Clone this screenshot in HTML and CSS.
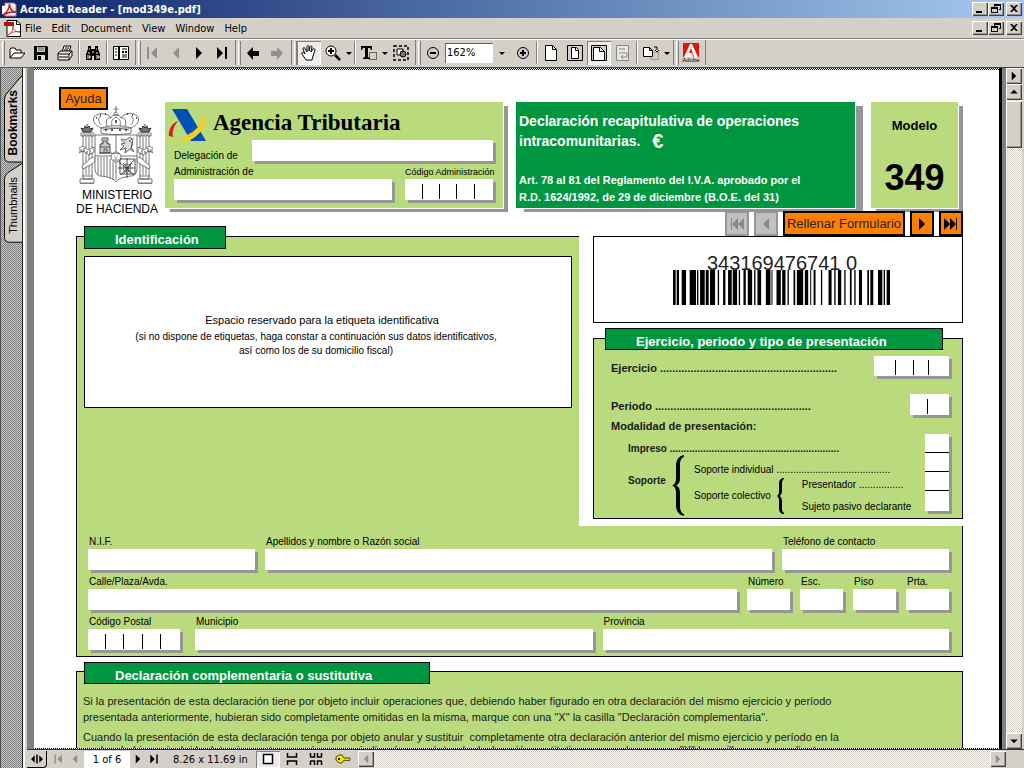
FILE: index.html
```html
<!DOCTYPE html>
<html lang="es">
<head>
<meta charset="utf-8">
<title>Acrobat Reader - [mod349e.pdf]</title>
<link rel="stylesheet" href="styles.css">
</head>
<body>
<svg class="defs" aria-hidden="true">
  <symbol id="i-min" viewBox="0 0 12 10"><path d="M2 7h6v2H2z"/></symbol>
  <symbol id="i-restore" viewBox="0 0 12 10"><path d="M4 0h7v6H9V5h1V2H5v1H4zM1 3h7v6H1zM2 5v3h5V5z" fill-rule="evenodd"/></symbol>
  <symbol id="i-close" viewBox="0 0 12 10"><path d="M2 1h2l2 2 2-2h2L7 4.500l3 3.500H8L6 6 4 8H2l3-3.500z"/></symbol>
  <symbol id="i-down" viewBox="0 0 8 16"><path d="M1 7h6L4 10z"/></symbol>
  <symbol id="i-first" viewBox="0 0 16 16"><path d="M2 2h2v12H2zM12 2v12L6 8z"/></symbol>
  <symbol id="i-prev" viewBox="0 0 16 16"><path d="M11 2v12L5 8z"/></symbol>
  <symbol id="i-next" viewBox="0 0 16 16"><path d="M5 2v12l6-6z"/></symbol>
  <symbol id="i-last" viewBox="0 0 16 16"><path d="M3 2v12l6-6zM11 2h2v12h-2z"/></symbol>
  <symbol id="i-left" viewBox="0 0 16 16"><path d="M2 8l6-6v4h6v5H8v4z"/></symbol>
  <symbol id="i-right" viewBox="0 0 16 16"><path d="M14 8L8 2v4H2v5h6v4z"/></symbol>
  <symbol id="i-dfirst" viewBox="0 0 16 16"><path d="M2 2h1v12H2zM9 2v12L3 8zM15 2v12L9 8z"/></symbol>
  <symbol id="i-dlast" viewBox="0 0 16 16"><path d="M1 2v12l6-6zM7 2v12l6-6zM13 2h1v12h-1z"/></symbol>
</svg>
<div class="app">
  <header class="titlebar">
    <svg class="app-icon" viewBox="0 0 16 16"><path d="M3 1h10l2 2v12H3z" fill="#eee" stroke="#a66"/><path d="M0 4h6v9H0z" fill="#fff"/><path d="M1 14C6 10 8 6 8 2c0 5 2 8 7 9-5-1-9 0-14 3z" fill="none" stroke="#c01818" stroke-width="1.500"/></svg>
    <h1 class="title">Acrobat Reader - [mod349e.pdf]</h1>
    <div class="winbtns">
      <button aria-label="Minimize"><svg><use href="#i-min"/></svg></button><button aria-label="Restore"><svg><use href="#i-restore"/></svg></button><button class="close" aria-label="Close"><svg><use href="#i-close"/></svg></button>
    </div>
  </header>
  <nav class="menubar">
    <svg class="doc-icon" viewBox="0 0 17 17"><path d="M3 .5h10l3.500 3.500v12.500H3z" fill="#fff" stroke="#000"/><path d="M12.500 1v3.500H16" fill="none" stroke="#000"/><path d="M0 2h10v4H0z" fill="#b01010"/><path d="M4 15C8 13 9 10 9 6c0 4 3 6 7 6-5-1-8 0-12 3z" fill="none" stroke="#e03030"/></svg>
    <button>File</button><button>Edit</button><button>Document</button><button>View</button><button>Window</button><button>Help</button>
    <div class="winbtns">
      <button aria-label="Minimize document"><svg><use href="#i-min"/></svg></button><button aria-label="Restore document"><svg><use href="#i-restore"/></svg></button><button class="close" aria-label="Close document"><svg><use href="#i-close"/></svg></button>
    </div>
  </nav>
  <div class="toolbar" role="toolbar">
    <div class="group">
      <button aria-label="Open"><svg viewBox="0 0 16 16"><path d="M1 13V4l1-1h4l1 2h5v3M1 13l4-5h11l-4 5z" fill="#fff" stroke="#000"/></svg></button>
      <button aria-label="Save"><svg viewBox="0 0 16 16"><path d="M1 1h13l1 1v13H1z"/><path d="M4 2h8v5H4z" fill="#d4d0c8"/><path d="M5 3h6M5 5h6" stroke="#555"/><path d="M4 10h8v5H4z" fill="#ddd"/><path d="M5 11h3v4H5z"/></svg></button>
      <button aria-label="Print"><svg viewBox="0 0 16 16"><path d="M5 7l2-6h7l-2 6z" fill="#fff" stroke="#000"/><path d="M8 3h4M7 5h4" stroke="#000"/><path d="M1 8l3-2h11v5l-3 4H1z" fill="#eee" stroke="#000"/><path d="M1 9h11l3-3M12 9v6M2 12h9" fill="none" stroke="#000"/></svg></button>
      <span class="sep"></span>
      <button aria-label="Find"><svg viewBox="0 0 16 16"><path d="M3 1h3v3h4V1h3v3l2 5v6H9v-4H7v4H1V9l2-5z"/><path d="M3 8h2M2 11h3v2H2M11 8h2M11 11h3v2h-3M7 7h2M4 4h1M11 4h1" stroke="#fff" fill="none"/></svg></button>
      <span class="sep"></span>
      <button aria-label="Navigation pane"><svg viewBox="0 0 16 16"><path d="M.5 1.500h15v13H.5z" fill="#fff" stroke="#000"/><path d="M5 1h2v14H5z"/><path d="M2 4h2M2 7h2M2 10h2M9 4h5M9 10h5M9 12h5" stroke="#000"/><path d="M9 6h2v2H9zM12 6h2v2h-2z"/></svg></button>
    </div>
    <div class="group pages">
      <button aria-label="First page" class="off"><svg><use href="#i-first"/></svg></button>
      <button aria-label="Previous page" class="off"><svg><use href="#i-prev"/></svg></button>
      <button aria-label="Next page"><svg><use href="#i-next"/></svg></button>
      <button aria-label="Last page"><svg><use href="#i-last"/></svg></button>
    </div>
    <div class="group">
      <button aria-label="Back"><svg><use href="#i-left"/></svg></button>
      <button aria-label="Forward" class="off"><svg><use href="#i-right"/></svg></button>
    </div>
    <div class="group">
      <button aria-label="Hand" class="pressed"><svg viewBox="0 0 16 16"><path d="M5 15L1 9c-1-2 1-2 2-1l1 1-2-5c0-2 2-2 2 0l2 3V2c0-2 2-2 2 0v4l1-4c1-2 2-1 2 0l-1 5 2-3c1-1 2 0 2 1l-2 6-1 4z" fill="#fff" stroke="#000"/></svg></button>
      <button aria-label="Zoom in"><svg viewBox="0 0 16 16"><circle cx="6" cy="6" r="5" fill="#fff" stroke="#000"/><path d="M3 6h6M6 3v6" stroke="#000" stroke-width="2"/><path d="M10 10l5 5" stroke="#000" stroke-width="2.500"/></svg></button>
      <button class="dd" aria-label="Zoom options"><svg><use href="#i-down"/></svg></button>
      <span class="sep"></span>
      <button aria-label="Text select"><svg viewBox="0 0 16 16"><path d="M0 1h11v4h-1L9 3H7v9l2 1v1H2v-1l2-1V3H2L1 5H0z"/><path d="M8.500 7.500h7v7h-7z" fill="none" stroke="#000" stroke-dasharray="1 1"/></svg></button>
      <button class="dd" aria-label="Text options"><svg><use href="#i-down"/></svg></button>
      <button aria-label="Graphics select"><svg viewBox="0 0 16 16"><path d="M1 1h14v14H1z" fill="none" stroke="#000" stroke-width="1.500" stroke-dasharray="3 2"/><path d="M4 4h6v6H4z" fill="#fff" stroke="#000"/><circle cx="10" cy="9" r="3" fill="#777" stroke="#000"/></svg></button>
    </div>
    <div class="group">
      <button aria-label="Zoom out"><svg viewBox="0 0 16 16"><circle cx="8" cy="8" r="5.500" fill="#ccc" stroke="#000"/><path d="M5 8h6" stroke="#000" stroke-width="2"/></svg></button>
      <input class="zoom" aria-label="Zoom" value="162%">
      <button class="dd wide" aria-label="Zoom levels"><svg><use href="#i-down"/></svg></button>
      <button aria-label="Zoom in step"><svg viewBox="0 0 16 16"><circle cx="8" cy="8" r="5.500" fill="#ccc" stroke="#000"/><path d="M5 8h6M8 5v6" stroke="#000" stroke-width="2"/></svg></button>
      <span class="sep"></span>
      <button aria-label="Actual size"><svg viewBox="0 0 16 16"><path d="M2.500.5h7l4 4v11h-11z" fill="#fff" stroke="#000"/><path d="M9.500.5v4h4" fill="none" stroke="#000"/></svg></button>
      <button aria-label="Fit page"><svg viewBox="0 0 16 16"><path d="M.5.5h15v15H.5z" fill="#d4d0c8" stroke="#000"/><path d="M4.500 2.500h5l2 2v9h-7z" fill="#fff" stroke="#000"/><path d="M8.500 2.500v3h3" fill="none" stroke="#000"/></svg></button>
      <button aria-label="Fit width" class="pressed"><svg viewBox="0 0 16 16"><path d="M.5.5h15v15H.5z" fill="#d4d0c8" stroke="#000"/><path d="M2.500 2.500h7l4 4v9h-11z" fill="#fff" stroke="#000"/><path d="M8.500 2.500v4h5" fill="none" stroke="#000"/></svg></button>
      <button aria-label="Reflow" class="off"><svg viewBox="0 0 16 16"><path d="M1.500.5h12v15h-12z" fill="#e8e8e8" stroke="#888"/><path d="M4 4h6M4 8h8v4H6M8 10l-2 2 2 2" fill="none" stroke="#888"/></svg></button>
      <span class="sep"></span>
      <button aria-label="Rotate"><svg viewBox="0 0 16 16"><path d="M7.500 7.500h8v7h-8z" fill="#ccc" stroke="#999"/><path d="M.5 2.500h6l3 3v6h-9z" fill="#fff" stroke="#000"/><path d="M6.500 2.500v3h3M11 2h3v3M12 5l2 2 2-2" fill="none" stroke="#000"/></svg></button>
      <button class="dd" aria-label="Rotate options"><svg><use href="#i-down"/></svg></button>
    </div>
    <div class="group">
      <button aria-label="Adobe" class="adobe"><svg viewBox="0 0 16 14"><path d="M0 0h16v14H0z" fill="#e8100c"/><path d="M1 14L7 1h2l6 13h-4L8 5 6 10h3l1 4z" fill="#fff"/></svg><span>Adobe</span></button>
    </div>
  </div>

  <div class="workspace">
    <aside class="sidebar">
      <button class="tab front"><svg viewBox="0 0 18 88" preserveAspectRatio="none"><path d="M18 .5L4 17C1 20 .5 22 .5 25v57c0 3 2 5 5 5H18" fill="#d4d0c8" stroke="#000"/></svg><span>Bookmarks</span></button>
      <button class="tab back"><svg viewBox="0 0 18 88" preserveAspectRatio="none"><path d="M18 .5L4 10C1 13 .5 15 .5 18v60c0 3 2 5 5 5H18" fill="#d4d0c8" stroke="#000"/></svg><span>Thumbnails</span></button>
    </aside>
    <div class="viewer">
      <div class="docarea">
        <main class="page">
          <button class="help">Ayuda</button>
          <section class="head">
            <div class="ministry">
              <svg class="crest" viewBox="0 0 74 78" stroke="#555" stroke-width="0.800">
                <path d="M37 0v7M34.500 3h5M35 7c2-2 4 0 4 2h-4zM22 22c-6-3-9-7-7-11 4-5 14-4 17 1 1-4 9-4 10 0 4-6 14-6 17-1 2 4-1 8-7 11z"/>
                <path d="M22 22c9-3 21-3 30 0v5c-9 2-21 2-30 0zM24 24c8-2 18-2 26 0M28 20c-2-5 0-9 4-8M46 20c2-5 0-9-4-8M33 20c-1-5 0-7 4-9 4 2 5 4 4 9M22 19c-3-4-3-7 0-9M52 19c3-4 3-7 0-9"/>
                <path d="M17 12h1M21 9h1M26 8h1M48 8h1M53 9h1M57 12h1M37 14v3M26 24h2M32 24h2M40 24h2M46 24h2" stroke="#222" stroke-width="1.500"/>
                <path d="M16 29h42v32c0 6-2 9-6 9-7 1-12 2-15 6-3-4-8-5-15-6-4 0-6-3-6-9z"/>
                <path d="M37 29v18M16 50h16M42 50h16M37 55v19M19 51v18M22 51v19M25 51v20M28 51v20M31 53v20M34 56v18"/>
                <path d="M21 47v-9h3v-3h4v3h3v9zM20 47h13M23 35v-3h6v3M25 47v-4h3v4M21 41h10M23 38v-2M29 38v-2" stroke="#333" fill="#ccc"/>
                <path d="M42 34c2-2 3 0 5 0 2-3 5-3 6-1l-3 2c4 1 5 4 2 6l3 5-4-3-5 4 1-5-6 2 4-4-3-2 4-1zM54 32l-2 11" stroke="#444" fill="#ddd"/>
                <circle cx="37" cy="51" r="5" fill="#fff"/><path d="M33 48c3-1 5-1 8 0M34 54h6M35 50h1M38 50h1M36 52h2"/>
                <path d="M40 56l15 13M55 54L42 69M39 62h17M48 52v20M41 53h15v15H41zM44 57c4 3 5 8 1 10M53 57c-4 3-5 8-1 10" stroke="#222"/><circle cx="48" cy="62" r="4"/>
                <path d="M4 29h9v44H4zM61 29h9v44h-9zM2 27h13v3H2zM59 27h13v3H59zM1 73h14v4H1zM59 73h14v4H59zM3 70h11M60 70h11M7 31v38M10 31v38M64 31v38M67 31v38"/>
                <path d="M4 26l-2-4 3 1 1-3 2 2 2-2 1 3 3-1-2 4zM62 26l-2-4 3 1 1-3 2 2 2-2 1 3 3-1-2 4zM8 18v3M66 18v3" stroke="#111" fill="#777"/>
                <path d="M0 42l4-2 5 4 6-3v5l-5 3-6-4-4 2zM3 60l9-8c5-3 5 4 1 6l-9 5zM74 42l-4-2-5 4-6-3v5l5 3 6-4 4 2zM71 60l-9-8c-5-3-5 4-1 6l9 5z" fill="#fff"/>
                <path d="M2 43v3M5 42v4M8 45v2M11 44v4M72 43v3M69 42v4M66 45v2M63 44v4M1 78h14M59 78h14" stroke="#222"/>
              </svg>
              <p>MINISTERIO<br>DE HACIENDA</p>
            </div>
            <div class="card agency">
              <div class="brand">
                <svg viewBox="0 0 38 34"><path d="M4 1h15l19 32H23z" fill="#0050b8"/><path d="M10 13C4 15 0 22 1 28l4 1c-1-6 1-11 5-16z" fill="#d81e1e"/><path d="M1 29c2 6 14 5 24-3C34 18 38 12 36 7c4 7 1 14-9 22C18 36 4 37 1 29z" fill="#f8d020"/><path d="M18 29c9-4 16-11 18-21" stroke="#f8d020" stroke-width="2" fill="none"/></svg>
                <h2>Agencia Tributaria</h2>
              </div>
              <div class="deleg"><label for="deleg">Delegación de</label><input id="deleg"></div>
              <div class="admin">
                <div class="field"><label for="admin">Administración de</label><input id="admin"></div>
                <div class="field code"><label for="codadm">Código Administración</label><input id="codadm" class="cells five"></div>
              </div>
            </div>
            <div class="card subject">
              <h2>Declaración recapitulativa de operaciones<br>intracomunitarias. <span class="euro">€</span></h2>
              <p>Art. 78 al 81 del Reglamento del I.V.A. aprobado por el<br>R.D. 1624/1992, de 29 de diciembre (B.O.E. del 31)</p>
            </div>
            <div class="card model"><span>Modelo</span><strong>349</strong></div>
          </section>
          <nav class="formnav">
            <button class="gray" aria-label="Primera"><svg><use href="#i-dfirst"/></svg></button>
            <button class="gray" aria-label="Anterior"><svg><use href="#i-prev"/></svg></button>
            <button class="fill">Rellenar Formulario</button>
            <button aria-label="Siguiente"><svg><use href="#i-next"/></svg></button>
            <button aria-label="Última"><svg><use href="#i-dlast"/></svg></button>
          </nav>
          <section class="main">
            <div class="ident">
              <h3 class="band short">Identificación</h3>
              <div class="sticker"><p>Espacio reservado para la etiqueta identificativa</p><small>(si no dispone de etiquetas, haga constar a continuación sus datos identificativos,<br>así como los de su domicilio fiscal)</small></div>
            </div>
            <div class="side">
              <div class="barcode">
                <span>343169476741 0</span>
                <svg viewBox="279 0 650 105" preserveAspectRatio="none"><path d="M279 0h8v105h-8zM290 0h7v105h-7zM305 0h13v105h-13zM329 0h19v105h-19zM351 0h4v105h-4zM360 0h14v105h-14zM377 0h9v105h-9zM390 0h15v105h-15zM413 0h4v105h-4zM429 0h7v105h-7zM444 0h11v105h-11zM458 0h13v105h-13zM476 0h4v105h-4zM490 0h7v105h-7zM503 0h13v105h-13zM522 0h4v105h-4zM532 0h11v105h-11zM557 0h14v105h-14zM574 0h3v105h-3zM589 0h13v105h-13zM606 0h10v105h-10zM622 0h4v105h-4zM640 0h5v105h-5zM650 0h19v105h-19zM674 0h10v105h-10zM690 0h3v105h-3zM700 0h6v105h-6zM722 0h4v105h-4zM745 0h9v105h-9zM762 0h4v105h-4zM773 0h10v105h-10zM792 0h4v105h-4zM809 0h5v105h-5zM822 0h4v105h-4zM836 0h9v105h-9zM861 0h5v105h-5zM870 0h9v105h-9zM893 0h13v105h-13zM910 0h4v105h-4zM919 0h10v105h-10z"/></svg>
              </div>
              <div class="period">
                <h3 class="band long">Ejercicio, periodo y tipo de presentación</h3>
                <div class="line"><label for="ejer">Ejercicio ..........................................................</label><input id="ejer" class="cells four"></div>
                <div class="line"><label for="per">Periodo ...................................................</label><input id="per" class="cells two"></div>
                <h4>Modalidad de presentación:</h4>
                <div class="mode">
                  <div class="tree">
                    <label for="m1" class="b">Impreso .............................................................</label>
                    <div class="branch">
                      <span class="b sop">Soporte</span>
                      <svg class="brace big" viewBox="0 0 12 62"><path d="M12 0C7 1 4 5 4 11v12c0 4-1 7-4 8 3 1 4 4 4 8v12c0 6 3 10 8 11v-2c-3-1-4-4-4-9V38c0-3-1-6-4-7 3-1 4-4 4-7V11c0-5 1-8 4-9z"/></svg>
                      <div class="leaves">
                        <label for="m2">Soporte individual .........................................</label>
                        <div class="sub"><span>Soporte colectivo</span>
                          <svg class="brace" viewBox="0 0 7 36"><path d="M7 0C4 0 2 2 2 6v7c0 3-1 4-2 5 1 1 2 2 2 5v7c0 4 2 6 5 6v-1c-2-1-2-3-2-5v-7c0-2-1-4-2-5 1-1 2-3 2-5V6c0-2 0-4 2-5z"/></svg>
                          <div class="subleaves"><label for="m3">Presentador ................</label><label for="m4">Sujeto pasivo declarante</label></div>
                        </div>
                      </div>
                    </div>
                  </div>
                  <div class="checks"><input type="checkbox" id="m1"><input type="checkbox" id="m2"><input type="checkbox" id="m3"><input type="checkbox" id="m4"></div>
                </div>
              </div>
            </div>
            <div class="fields">
              <div class="row">
                <div class="field nif"><label for="nif">N.I.F.</label><input id="nif"></div>
                <div class="field grow"><label for="ape">Apellidos y nombre o Razón social</label><input id="ape"></div>
                <div class="field nif"><label for="tel">Teléfono de contacto</label><input id="tel"></div>
              </div>
              <div class="row">
                <div class="field grow"><label for="calle">Calle/Plaza/Avda.</label><input id="calle"></div>
                <div class="field num"><label for="num">Número</label><input id="num"></div>
                <div class="field num"><label for="esc">Esc.</label><input id="esc"></div>
                <div class="field num"><label for="piso">Piso</label><input id="piso"></div>
                <div class="field num"><label for="prta">Prta.</label><input id="prta"></div>
              </div>
              <div class="row">
                <div class="field cp"><label for="cp">Código Postal</label><input id="cp" class="cells five"></div>
                <div class="field muni"><label for="muni">Municipio</label><input id="muni"></div>
                <div class="field prov"><label for="prov">Provincia</label><input id="prov"></div>
              </div>
            </div>
          </section>
          <section class="comp">
            <h3 class="band medium">Declaración complementaria o sustitutiva</h3>
            <p>Si la presentación de esta declaración tiene por objeto incluir operaciones que, debiendo haber figurado en otra declaración del mismo ejercicio y período<br>presentada anteriormente, hubieran sido completamente omitidas en la misma, marque con una "X" la casilla "Declaración complementaria".</p>
            <p class="tight">Cuando la presentación de esta declaración tenga por objeto anular y sustituir&nbsp; completamente otra declaración anterior del mismo ejercicio y período en la<br>cual se hubieran incluido datos inexactos o erróneos, se indicará su carácter de declaración sustitutiva marcando con una "X" la casilla correspondiente.</p>
          </section>
        </main>
        <div class="vscroll">
          <button aria-label="Menu"><svg><use href="#i-next"/></svg></button>
          <button aria-label="Up"><svg viewBox="0 0 16 16"><path d="M3 10h10L8 5z"/></svg></button>
          <div class="thumb"></div>
          <button class="bottom" aria-label="Down"><svg viewBox="0 0 16 16"><path d="M3 6h10l-5 5z"/></svg></button>
        </div>
      </div>
      <footer class="status">
        <button class="split" aria-label="Toggle pane"><svg viewBox="0 0 16 16"><path d="M5 3v10L0 8zM11 3v10l5-5zM7 2h2v12H7z"/></svg></button>
        <button class="off" aria-label="First"><svg><use href="#i-first"/></svg></button>
        <button class="off" aria-label="Previous"><svg><use href="#i-prev"/></svg></button>
        <input class="pageno" aria-label="Page" value="1 of 6">
        <button aria-label="Next"><svg><use href="#i-next"/></svg></button>
        <button aria-label="Last"><svg><use href="#i-last"/></svg></button>
        <span class="size">8.26 x 11.69 in</span>
        <button class="view pressed" aria-label="Single page"><svg viewBox="0 0 16 16"><path d="M3.500 3.500h9v9h-9z" fill="#fff" stroke="#000" stroke-width="1.500"/></svg></button>
        <button class="view" aria-label="Continuous"><svg viewBox="0 0 16 16"><path d="M3.500 2v4h9V2M3.500 14v-4h9v4" fill="none" stroke="#000" stroke-width="1.500"/></svg></button>
        <button class="view" aria-label="Facing"><svg viewBox="0 0 16 16"><path d="M2 6h4.500V2M14 6H9.500V2M2 10h4.500v4M14 10H9.500v4M2.500 2v4M13.500 2v4M2.500 10v4M13.500 10v4" fill="none" stroke="#000" stroke-width="1.500"/></svg></button>
        <button class="view key" aria-label="Security"><svg viewBox="0 0 16 16"><path d="M4 4h3l2 3h6v2l-1 1-2-1-1 1-2-1-2 3H4L1 9V6z" fill="#f4e800" stroke="#554400"/><path d="M3 7h2v2H3z"/></svg></button>
        <button class="arrow off" aria-label="Scroll left"><svg><use href="#i-prev"/></svg></button>
        <div class="track"></div>
        <button class="arrow off" aria-label="Scroll right"><svg><use href="#i-next"/></svg></button>
        <span class="corner"></span>
      </footer>
    </div>
  </div>
</div>
</body>
</html>
```
FILE: styles.css
```css
:root {
  --face: #d4d0c8;
  --light: #b9db7d;
  --green: #009640;
  --shade: #969696;
  --orange: #ff8000;
}
*, *::before, *::after { box-sizing: border-box; }
html, body { height: 100%; }
body { margin: 0; overflow: hidden; font: 12px "Liberation Sans", Arial, sans-serif; color: #000; }
h1, h2, h3, h4, p { margin: 0; font-size: inherit; }
button { font: inherit; color: inherit; padding: 0; border: 0; background: none; display: flex; align-items: center; justify-content: center; flex: none; white-space: nowrap; }
input { font: inherit; margin: 0; padding: 0 3px; border: 0; border-radius: 0; min-width: 0; background: #fff; }
svg { display: block; flex: none; fill: #000; }
label { white-space: nowrap; }
.defs { position: absolute; width: 0; height: 0; }
.app { height: 100%; display: flex; flex-direction: column; background: var(--face); }

/* Window chrome */
.titlebar { flex: none; height: 18px; display: flex; align-items: center; padding: 0 2px; background: linear-gradient(90deg, #0a246a, #a6caf0); color: #fff; }
.app-icon { width: 15px; height: 15px; margin-right: 3px; }
.title { font: bold 11px "DejaVu Sans Condensed", "Noto Sans", sans-serif; }
.menubar { flex: none; height: 20px; display: flex; align-items: center; padding: 0 2px; gap: 10px; font: 11px "DejaVu Sans Condensed", "Noto Sans", sans-serif; }
.doc-icon { width: 17px; height: 17px; margin: 0 -6px 0 2px; }
.winbtns { margin-left: auto; display: flex; }
.winbtns button { width: 16px; height: 14px; background: var(--face); box-shadow: inset 1px 1px #fff, inset -1px -1px #404040, inset -2px -2px #999; }
.winbtns .close { margin-left: 2px; }
.winbtns svg { width: 12px; height: 10px; }
.toolbar { flex: none; height: 29px; display: flex; border-top: 1px solid #808080; box-shadow: inset 0 1px #fff; padding: 1px 0 2px; }
.group { display: flex; align-items: center; padding-right: 2px; border-right: 1px solid #808080; }
.group::before { content: ""; width: 3px; height: 24px; margin-left: 2px; border-left: 1px solid #fff; border-right: 1px solid #808080; }
.group button { width: 24px; height: 24px; }
.group svg { width: 16px; height: 16px; }
.pages button { width: 23px; }
.group .dd { width: 8px; }
.group .dd svg { width: 8px; }
.group .wide { margin: 0 5px; }
.off svg { fill: #909090; }
.sep { width: 2px; height: 23px; margin: 0 1px; background: linear-gradient(90deg, #808080 50%, #fff 50%); }
.pressed { background: #eeece8; box-shadow: inset 1px 1px #808080, inset -1px -1px #fff; }
.zoom { width: 48px; height: 20px; box-shadow: inset 1px 1px #666; font: 11px "DejaVu Sans Condensed", "Noto Sans", sans-serif; padding: 0 2px; }
.group .adobe { flex-direction: column; font-size: 6px; line-height: 6px; }
.group .adobe svg { width: 16px; height: 14px; }

.workspace { flex: 1; min-height: 0; display: flex; }
.sidebar { flex: none; width: 27px; padding: 7px 5px 0 3px; border-left: 1px solid #555; border-top: 1px solid #555;
  background: linear-gradient(90deg, #222 1px, #fff 1px 3px, var(--face) 3px) right / 5px 100% no-repeat, repeating-conic-gradient(#808080 0 25%, #c8c4bc 0 50%) 0 0 / 2px 2px; }
.tab { position: relative; width: 18px; height: 88px; }
.tab svg { position: absolute; inset: 0; width: 100%; height: 100%; }
.tab span { position: relative; writing-mode: vertical-rl; transform: rotate(180deg); font-size: 11px; }
.front { z-index: 1; }
.front span { font-weight: bold; margin-top: 8px; font-size: 12px; }
.back { height: 84px; }
.viewer { flex: 1; min-width: 0; display: flex; flex-direction: column; }
.docarea { flex: 1; min-height: 0; display: flex; border-left: 7px solid #808080; background: #808080; border-top: 1px solid #444; }
.page { position: relative; flex: 1; min-width: 0; overflow: hidden; background: #fff; border-right: 3px solid #000; margin-right: 4px; padding: 34px 36px 0 42px; }
.page::before, .page::after { content: ""; position: absolute; left: 0; right: 0; height: 2px; background: repeating-conic-gradient(#000 0 25%, #fff 0 50%) 0 0 / 2px 2px; }
.page::before { top: 0; }
.page::after { bottom: 0; height: 1px; }

/* Form header */
.help { position: absolute; left: 25px; top: 19px; width: 49px; height: 23px; border: 2px solid #000; background: var(--orange); font-size: 13px; z-index: 1; color: #222; }
.head { display: grid; grid-template-columns: 82px minmax(0, 345fr) minmax(0, 352fr) 103px; align-items: start; padding-right: 5px; }
.ministry { padding-top: 4px; text-align: center; line-height: 14px; }
.crest { width: 74px; height: 78px; margin: 0 auto 4px 3px; fill: none; }
.card { height: 106px; background: var(--light); box-shadow: 1px 1px #fff, 5px 4px var(--shade); }
.card input, .line input, .fields input { box-shadow: 3px 3px var(--shade); }
.agency { margin-left: 7px; padding: 4px 10px 0 9px; font-size: 10px; }
.brand { display: flex; align-items: center; height: 34px; gap: 7px; margin-left: -6px; padding-top: 4px; }
.brand svg { width: 38px; height: 34px; }
.brand h2 { font: bold 23px "Liberation Serif", "Times New Roman", serif; margin-top: -4px; }
.deleg { display: flex; align-items: flex-end; gap: 14px; }
.deleg input { flex: 1; height: 21px; }
.deleg label { line-height: 10px; }
.admin { display: flex; gap: 13px; margin-top: 4px; }
.admin .field:first-child { flex: 1; }
.field { display: flex; flex-direction: column; min-width: 0; }
.admin label { line-height: 14px; }
.admin input { height: 21px; }
.code { width: 88px; }
.code label { font-size: 9px; }
.cells { --tick: linear-gradient(#000, #000); background-color: #fff; background-repeat: no-repeat; background-size: 1px 15px; }
.five { background-image: var(--tick), var(--tick), var(--tick), var(--tick); background-position: 19% 5px, 39% 5px, 59% 5px, 79% 5px; }
.four { width: 75px; background-image: var(--tick), var(--tick), var(--tick); background-position: 29% 4px, 53% 4px, 73% 4px; }
.two { width: 39px; background-image: var(--tick); background-position: 45% 5px; }
.subject { margin-left: 13px; padding: 9px 0 2px 3px; background: var(--green); color: #fff; box-shadow: 1px 1px #fff, 8px 4px var(--shade); display: flex; flex-direction: column; justify-content: space-between; white-space: nowrap; }
.subject h2 { font-size: 14px; line-height: 20px; }
.subject p { font-size: 11px; font-weight: bold; line-height: 17px; }
.euro { font-size: 20px; line-height: 16px; margin-left: 8px; vertical-align: -2px; }
.model { margin-left: 16px; display: flex; flex-direction: column; align-items: center; font-weight: bold; font-size: 13px; padding-top: 16px; }
.model strong { font-size: 36px; line-height: 40px; margin-top: 25px; }
.model span { line-height: 15px; }
.formnav { position: relative; display: flex; justify-content: flex-end; gap: 5px; margin-top: -5px; }
.formnav button { width: 24px; height: 25px; border: 2px solid #000; background: var(--orange); }
.formnav .fill { width: 122px; font-size: 13px; color: #222; }
.formnav .gray { background: #c0c0c0; border-color: #969696; }
.formnav svg { width: 16px; height: 16px; }
.gray svg { fill: #888; }

/* Form body */
.main { display: grid; grid-template-columns: minmax(0, 503fr) minmax(0, 370fr); column-gap: 14px; }
.ident { background: var(--light); border: solid #000; border-width: 1px 0 0 1px; padding: 0 7px; }
.band { height: 23px; line-height: 26px; overflow: hidden; margin-top: -11px; padding-left: 30px; border: 1px solid #000; background: var(--green); color: #fff; font-size: 13px; font-weight: bold; white-space: nowrap; }
.short { width: 142px; }
.sticker { margin-top: 7px; height: 152px; border: 1px solid #000; background: #fff; display: flex; flex-direction: column; align-items: center; justify-content: center; gap: 4px; text-align: center; font-size: 11px; padding: 8px 24px 0 0; }
.sticker p { margin-left: 12px; }
.sticker small { font-size: 10px; line-height: 14px; }
.side { display: flex; flex-direction: column; gap: 15px; padding-bottom: 7px; }
.barcode { height: 87px; border: 1px solid #000; display: flex; flex-direction: column; align-items: center; padding-top: 15px; color: #222; }
.barcode span { font-size: 20px; line-height: 22px; margin-left: 8px; }
.barcode svg { width: 217px; height: 35px; margin-top: -4px; margin-left: 6px; }
.period { background: var(--light); border: 1px solid #000; padding: 0 13px 2px 17px; font-size: 11px; }
.long { width: 338px; height: 22px; line-height: 25px; margin-left: -6px; }
.line { display: flex; justify-content: space-between; align-items: center; margin-top: 6px; font-weight: bold; color: #1a1a1a; }
.line label { padding-top: 3px; }
.line + .line { margin-top: 18px; }
.line input { height: 20px; }
.line .two { height: 21px; }
.period h4 { line-height: 16px; margin-top: 3px; color: #1a1a1a; }
.mode { display: flex; justify-content: space-between; align-items: flex-start; font-size: 10px; line-height: 12px; }
.tree { padding: 9px 0 0 17px; }
.tree label { display: block; }
.b { font-weight: bold; color: #1a1a1a; }
.branch { display: flex; align-items: center; }
.sop { width: 44px; padding-bottom: 10px; }
.brace { width: 7px; height: 36px; }
.brace.big { width: 12px; height: 61px; margin-right: 10px; }
.leaves { padding-top: 7px; }
.sub { display: flex; align-items: center; gap: 6px; margin-top: 2px; white-space: nowrap; }
.subleaves { margin-left: 12px; display: flex; flex-direction: column; gap: 10px; }
.checks { display: flex; flex-direction: column; box-shadow: 3px 3px var(--shade); }
.checks input { appearance: none; width: 24px; height: 19px; border-bottom: 1px solid #000; }
.checks input:last-child { height: 20px; border-bottom: 0; }
.fields { grid-column: 1 / -1; background: var(--light); border: solid #000; border-width: 0 1px 1px; padding: 8px 13px 6px 11px; display: flex; flex-direction: column; gap: 4px; font-size: 10px; }
.row { display: flex; gap: 10px; }
.fields label { line-height: 15px; padding-left: 1px; }
.fields input { height: 21px; }
.grow { flex: 1; }
.nif { width: 167px; }
.num { width: 43px; }
.cp { width: 92px; margin-right: 5px; }
.muni { flex: 397; }
.prov { flex: 346; }
.comp { margin-top: 14px; background: var(--light); border: 1px solid #000; padding: 0 6px 20px; color: #1a1a1a; font-size: 11px; line-height: 16px; }
.comp p { margin-top: 9px; white-space: nowrap; }
.comp .tight { margin-top: 6px; line-height: 13px; }
.medium { width: 346px; height: 22px; line-height: 25px; margin-top: -10px; margin-left: 1px; }

/* Scroll bars and status bar */
.vscroll { flex: none; width: 18px; border-right: 2px solid var(--face); display: flex; flex-direction: column; background: repeating-conic-gradient(#fff 0 25%, var(--face) 0 50%) 0 0 / 2px 2px; }
.vscroll button, .thumb, .arrow { flex: none; width: 16px; height: 16px; background: var(--face); box-shadow: inset 1px 1px #fff, inset -1px -1px #404040, inset -2px -2px #999; }
.vscroll svg { width: 12px; height: 12px; }
.vscroll .thumb { height: 47px; margin-top: 1px; }
.vscroll .bottom { margin-top: auto; }
.status { flex: none; height: 19px; display: flex; align-items: center; border-top: 1px solid #333; font: 11px "DejaVu Sans Condensed", "Noto Sans", sans-serif; }
.status svg { width: 12px; height: 12px; }
.status button { width: 16px; height: 17px; }
.status .split { width: 20px; border: solid #000; border-width: 0 1px 1px 0; border-radius: 0 0 4px 0; margin-right: 4px; }
.pageno { width: 46px; height: 17px; text-align: center; margin-left: 1px; }
.size { margin: 0 8px 0 11px; white-space: nowrap; }
.status .view { width: 24px; }
.status .view svg { width: 16px; height: 16px; }
.status .key { width: 30px; }
.status .arrow { height: 16px; }
.track { flex: 1; align-self: stretch; background: repeating-conic-gradient(#fff 0 25%, var(--face) 0 50%) 0 0 / 2px 2px; }
.corner { width: 18px; }
```
